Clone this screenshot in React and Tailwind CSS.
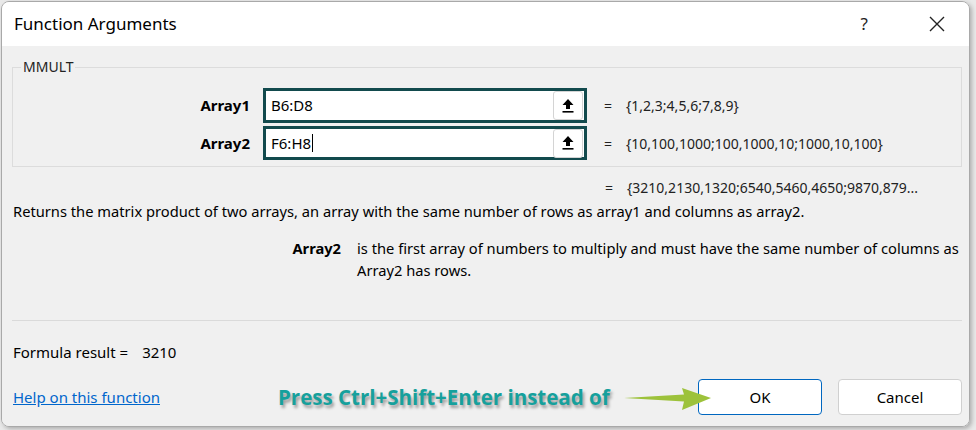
import React from "react";

const font = { fontFamily: '"Noto Sans", "Open Sans", sans-serif' };

function UpBtn() {
  return (
    <div className="w-[30px] h-[29px] mr-[1px] bg-white border border-[#d4d4d4] rounded-[3px] flex items-center justify-center">
      <svg width="12" height="14" viewBox="0 0 12 14">
        <path d="M6 0 L11.5 6 L8 6 L8 10 L4 10 L4 6 L0.5 6 Z" fill="#000" />
        <rect x="0.5" y="12" width="11" height="1.6" fill="#000" />
      </svg>
    </div>
  );
}

function ArgRow({ label, value, result, caret, h }) {
  return (
    <div className="flex items-center">
      <div className="w-[237px] text-right font-bold text-[15px] text-black">{label}</div>
      <div
        className={`ml-[13px] w-[324px] ${h} border-[3px] border-[#124a4d] bg-white flex items-center justify-between`}
      >
        <div className="pl-[5px] text-[15px] text-black flex items-center">
          {value}
          {caret && <span className="inline-block w-[1px] h-[18px] bg-black ml-[1px]" />}
        </div>
        <UpBtn />
      </div>
      <div className="ml-[17px] text-[14px] text-[#222]">=</div>
      <div className="ml-[14px] text-[14px] text-[#222]">{result}</div>
    </div>
  );
}

export default function App() {
  return (
    <div className="w-[976px] h-[430px] bg-[#e9e9e9] overflow-hidden" style={font}>
      <div className="ml-[1px] mt-[1px] w-[969px] h-[426px] border border-[#a9a9a9] rounded-[8px] overflow-hidden flex flex-col shadow-[2px_2px_4px_rgba(0,0,0,0.25)]">
        {/* Title bar */}
        <div className="h-[44px] bg-white flex items-center pl-[12px] shrink-0">
          <div className="text-[17px] text-black">Function Arguments</div>
          <div className="flex-1" />
          <div className="text-[17px] text-[#222] mr-[61px]">?</div>
          <svg width="16" height="16" viewBox="0 0 16 16" className="mr-[24px]">
            <path d="M1 1 L15 15 M15 1 L1 15" stroke="#222" strokeWidth="1.4" />
          </svg>
        </div>

        {/* Body */}
        <div className="flex-1 bg-[#f0f0f0] pl-[10px] pr-[7px] flex flex-col">
          {/* Group box */}
          <div className="relative mt-[21px] h-[100px] border border-[#dcdcdc] pt-[20px] flex flex-col gap-[3px]">
            <div className="absolute left-[8px] top-[-11px] bg-[#f0f0f0] px-[2px] text-[14px] text-[#222] leading-[20px]">
              MMULT
            </div>
            <ArgRow label="Array1" value="B6:D8" result="{1,2,3;4,5,6;7,8,9}" h="h-[35px]" />
            <ArgRow
              label="Array2"
              value="F6:H8"
              caret
              result="{10,100,1000;100,1000,10;1000,10,100}"
              h="h-[34px]"
            />
          </div>

          {/* Result */}
          <div className="flex items-center h-[20px] mt-[10px] text-[14px] text-[#222]">
            <div className="ml-[593px]">=</div>
            <div className="ml-[14px]">{"{3210,2130,1320;6540,5460,4650;9870,879..."}</div>
          </div>

          <div className="mt-[4px] ml-[1px] text-[14.7px] text-black leading-[20px]">
            Returns the matrix product of two arrays, an array with the same number of rows as array1 and columns as array2.
          </div>

          <div className="flex mt-[16px] text-[14.7px] leading-[22px] text-black">
            <div className="w-[329px] text-right font-bold shrink-0">Array2</div>
            <div className="ml-[16px] w-[608px]">
              is the first array of numbers to multiply and must have the same number of columns as Array2 has rows.
            </div>
          </div>

          <div className="flex-1" />
          <div className="h-[1px] bg-[#dadada] mb-[21px]" />

          <div className="text-[15px] text-black flex leading-[20px] ml-[1px]">
            <span>Formula result =</span>
            <span className="ml-[14px]">3210</span>
          </div>

          <div className="flex items-center mt-[17px] mb-[11px] relative">
            <a className="ml-[1px] text-[15px] text-[#0066cc] underline w-[265px]">Help on this function</a>
            <div
              className="text-[20.5px] font-bold text-[#16a09c] [text-shadow:2px_3px_3px_rgba(0,0,0,0.35)]"
              style={{ fontFamily: '"Open Sans", "Noto Sans", sans-serif' }}
            >
              Press Ctrl+Shift+Enter instead of
            </div>
            <div className="flex-1" />
            <button className="w-[124px] h-[36px] bg-white border border-[#0067c0] rounded-[4px] text-[15px] text-black">
              OK
            </button>
            <button className="ml-[16px] w-[124px] h-[36px] bg-white border border-[#d0d0d0] rounded-[4px] text-[15px] text-black">
              Cancel
            </button>
            <svg
              className="absolute left-[611px] top-[7px]"
              width="90"
              height="26"
              viewBox="0 0 90 26"
            >
              <path d="M1 12 L61 8.5 L59 2 L88 12 L59 24 L61 15.5 Z" fill="#9dc23b" />
            </svg>
          </div>
        </div>
      </div>
    </div>
  );
}
